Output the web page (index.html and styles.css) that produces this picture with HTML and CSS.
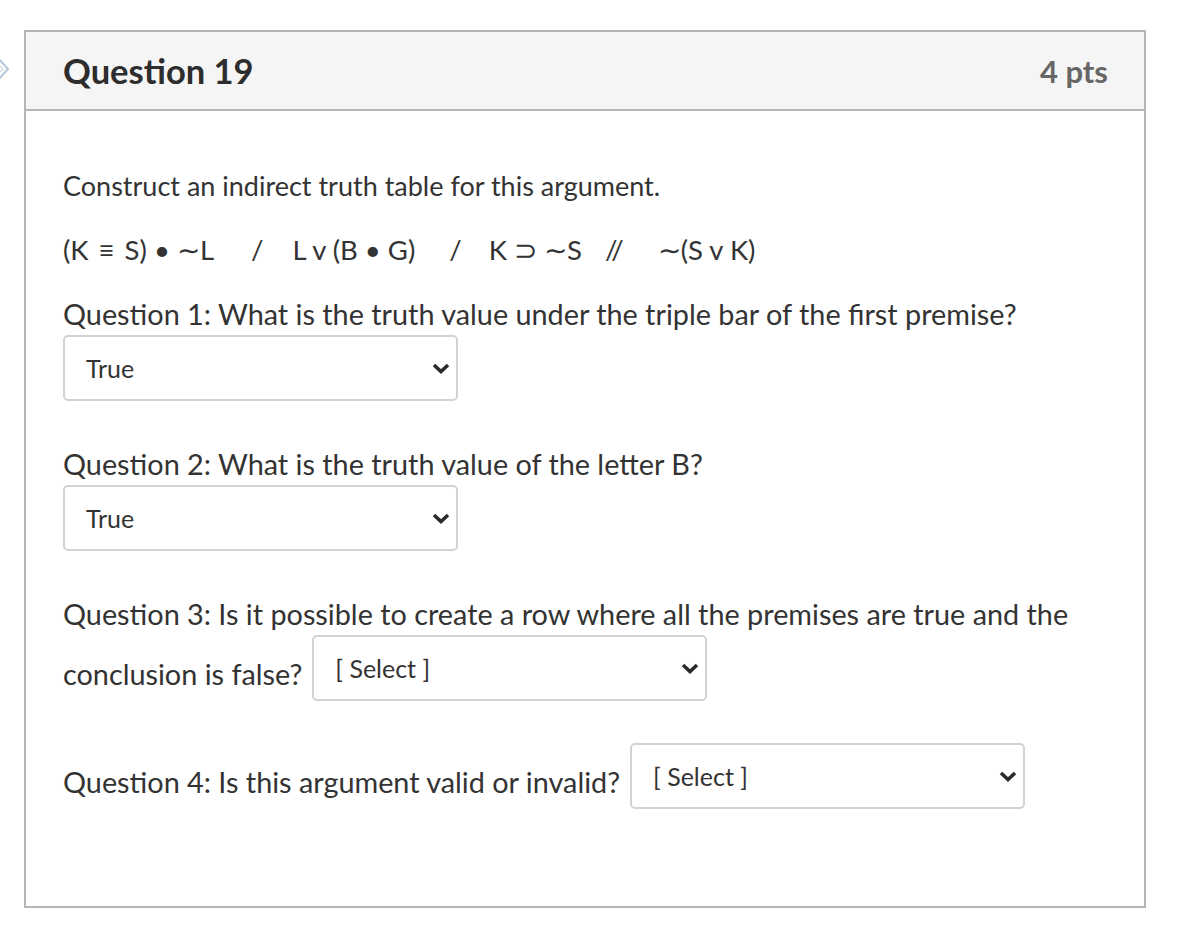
FILE: index.html
```html
<!DOCTYPE html>
<html lang="en">
<head>
<meta charset="utf-8">
<title>Question 19</title>
<link rel="stylesheet" href="styles.css">
</head>
<body>
<div class="page">
  <div class="flag">
    <svg width="10" height="30" viewBox="0 0 10 30" aria-hidden="true">
      <path d="M-4 2 L8 15 L-4 28" fill="none" stroke="#b4c6d8" stroke-width="2"/>
      <path d="M-7 5 L3 15 L-7 25" fill="none" stroke="#d6e0ea" stroke-width="1.5"/>
    </svg>
  </div>
  <div class="card">
    <div class="card-header">
      <span class="title">Question 19</span>
      <span class="pts">4 pts</span>
    </div>
    <div class="card-body">
      <p class="intro">Construct an indirect truth table for this argument.</p>
      <p class="formula"><span>(K <span class="eq">≡</span> S) • ∼L</span><span class="g1">/</span><span class="g2">L v (B • G)</span><span class="g3">/</span><span class="g4">K ⊃ ∼S</span><span class="g5">//</span><span class="g6">∼(S v K)</span></p>
      <p class="q q1">Question 1: What is the truth value under the triple bar of the first premise?</p>
      <div class="select sel-top">
        <span class="sel-text">True</span>
        <svg class="chev" width="18" height="11" viewBox="0 0 18 11" aria-hidden="true"><path d="M2 2 L9 8.5 L16 2" fill="none" stroke="#2b2b2b" stroke-width="3.6"/></svg>
      </div>
      <p class="q q2">Question 2: What is the truth value of the letter B?</p>
      <div class="select sel-top">
        <span class="sel-text">True</span>
        <svg class="chev" width="18" height="11" viewBox="0 0 18 11" aria-hidden="true"><path d="M2 2 L9 8.5 L16 2" fill="none" stroke="#2b2b2b" stroke-width="3.6"/></svg>
      </div>
      <p class="q q3">Question 3: Is it possible to create a row where all the premises are true and the</p>
      <div class="row row3">
        <span class="label">conclusion is false?</span>
        <div class="select">
          <span class="sel-text">[ Select ]</span>
          <svg class="chev" width="18" height="11" viewBox="0 0 18 11" aria-hidden="true"><path d="M2 2 L9 8.5 L16 2" fill="none" stroke="#2b2b2b" stroke-width="3.6"/></svg>
        </div>
      </div>
      <div class="row row4">
        <span class="label">Question 4: Is this argument valid or invalid?</span>
        <div class="select">
          <span class="sel-text">[ Select ]</span>
          <svg class="chev" width="18" height="11" viewBox="0 0 18 11" aria-hidden="true"><path d="M2 2 L9 8.5 L16 2" fill="none" stroke="#2b2b2b" stroke-width="3.6"/></svg>
        </div>
      </div>
    </div>
  </div>
</div>
</body>
</html>
```
FILE: styles.css
```css
html, body {
  margin: 0;
  padding: 0;
  background: #ffffff;
}

body {
  font-family: "Lato", "Liberation Sans", sans-serif;
  color: #333333;
}

.page {
  display: flex;
  align-items: flex-start;
  padding-top: 30px;
}

.flag {
  width: 24px;
  padding-top: 24px;
  display: flex;
}

.card {
  width: 1122px;
  box-sizing: border-box;
  border: 2px solid #b5b5b5;
}

.card-header {
  height: 77px;
  background: #f5f5f5;
  border-bottom: 2px solid #b5b5b5;
  display: flex;
  align-items: center;
  justify-content: space-between;
  padding: 0 36px 0 37px;
}

.title {
  font-size: 34.5px;
  font-weight: 700;
  color: #2d2d2d;
}

.pts {
  font-size: 31px;
  font-weight: 700;
  color: #666666;
}

.card-body {
  padding: 0 36px 97px 37px;
}

.card-body p {
  margin: 0;
}

.intro {
  font-size: 27px;
  line-height: 36px;
  margin-top: 57px !important;
}

.q,
.label {
  font-size: 28.8px;
  line-height: 36px;
}

.formula {
  margin-top: 28px !important;
  font-size: 27.5px;
  line-height: 36px;
  color: #333333;
  white-space: nowrap;
}

.formula .eq {
  margin: 0 3px;
}

.formula .g1 { margin-left: 37px; }
.formula .g2 { margin-left: 29px; }
.formula .g3 { margin-left: 34px; }
.formula .g4 { margin-left: 27px; }
.formula .g5 { margin-left: 23px; }
.formula .g6 { margin-left: 34px; }

.q1 {
  margin-top: 28px !important;
}

.q2,
.q3 {
  margin-top: 45px !important;
}

.select {
  width: 395px;
  height: 66px;
  box-sizing: border-box;
  border: 2px solid #d2d2d2;
  border-radius: 5px;
  background: #ffffff;
  display: flex;
  align-items: center;
  justify-content: space-between;
  padding: 0 6px 0 21px;
}

.sel-top {
  margin-top: 3px;
}

.sel-text {
  font-size: 25px;
  color: #333333;
}

.chev {
  display: block;
}

.row {
  display: flex;
  align-items: center;
  gap: 10px;
}

.row .label {
  margin-top: 12px;
}

.row3 {
  margin-top: 3px;
}

.row4 {
  margin-top: 42px;
}
```
